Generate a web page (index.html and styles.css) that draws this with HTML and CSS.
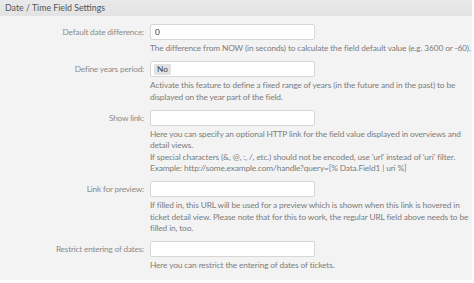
FILE: index.html
```html
<!DOCTYPE html>
<html>
<head>
<meta charset="utf-8">
<link rel="stylesheet" href="styles.css">
</head>
<body>
<div class="panel">
  <div class="header">Date / Time Field Settings</div>
  <div class="content">
    <div class="row">
      <div class="label">Default date difference:</div>
      <div class="field">
        <div class="input">0</div>
        <div class="help">The difference from NOW (in seconds) to calculate the field default value (e.g. 3600 or -60).</div>
      </div>
    </div>
    <div class="row">
      <div class="label">Define years period:</div>
      <div class="field">
        <div class="input"><span class="chip">No</span></div>
        <div class="help">Activate this feature to define a fixed range of years (in the future and in the past) to be displayed on the year part of the field.</div>
      </div>
    </div>
    <div class="row">
      <div class="label">Show link:</div>
      <div class="field">
        <div class="input"></div>
        <div class="help">Here you can specify an optional HTTP link for the field value displayed in overviews and detail views.<br>If special characters (&amp;, @, :, /, etc.) should not be encoded, use 'url' instead of 'uri' filter.<br>Example: http://some.example.com/handle?query=[% Data.Field1 | uri %]</div>
      </div>
    </div>
    <div class="row">
      <div class="label">Link for preview:</div>
      <div class="field">
        <div class="input"></div>
        <div class="help">If filled in, this URL will be used for a preview which is shown when this link is hovered in ticket detail view. Please note that for this to work, the regular URL field above needs to be filled in, too.</div>
      </div>
    </div>
    <div class="row">
      <div class="label">Restrict entering of dates:</div>
      <div class="field">
        <div class="input"></div>
        <div class="help">Here you can restrict the entering of dates of tickets.</div>
      </div>
    </div>
  </div>
</div>
</body>
</html>
```
FILE: styles.css
```css
html, body {
  margin: 0;
  padding: 0;
  background: #ffffff;
}
body {
  font-family: "Lato", "Open Sans", sans-serif;
  font-size: 8.3px;
  width: 474px;
  height: 283px;
  overflow: hidden;
}
.panel {
  width: 472px;
  height: 280px;
  background: #f3f3f3;
  border-radius: 0 0 3px 3px;
}
.header {
  height: 16px;
  line-height: 16px;
  background: linear-gradient(#e9e9e9, #e3e3e3);
  color: #555;
  padding-left: 5px;
  font-size: 8.8px;
}
.content {
  padding: 8px 0 0 0;
  display: flex;
  flex-direction: column;
  gap: 6.5px;
}
.row {
  display: grid;
  grid-template-columns: 144px 1fr;
  column-gap: 6px;
}
.label {
  text-align: right;
  color: #8c8c8c;
  line-height: 16px;
  height: 16px;
  font-size: 8.3px;
  letter-spacing: -0.2px;
}
.field {
  display: flex;
  flex-direction: column;
  gap: 3px;
  min-width: 0;
}
.input {
  width: 159px;
  height: 14px;
  background: #fff;
  border: 1px solid #d6d6d6;
  border-radius: 2px;
  line-height: 14px;
  padding-left: 4px;
  color: #333;
  box-sizing: content-box;
}
.chip {
  display: inline-block;
  background: #e2e2e2;
  color: #444;
  padding: 0 3px;
  line-height: 11px;
  margin-top: 1.5px;
  margin-left: -1px;
  border-radius: 1px;
  vertical-align: top;
}
.help {
  color: #7c7c7c;
  line-height: 11.5px;
  letter-spacing: -0.12px;
}
```
